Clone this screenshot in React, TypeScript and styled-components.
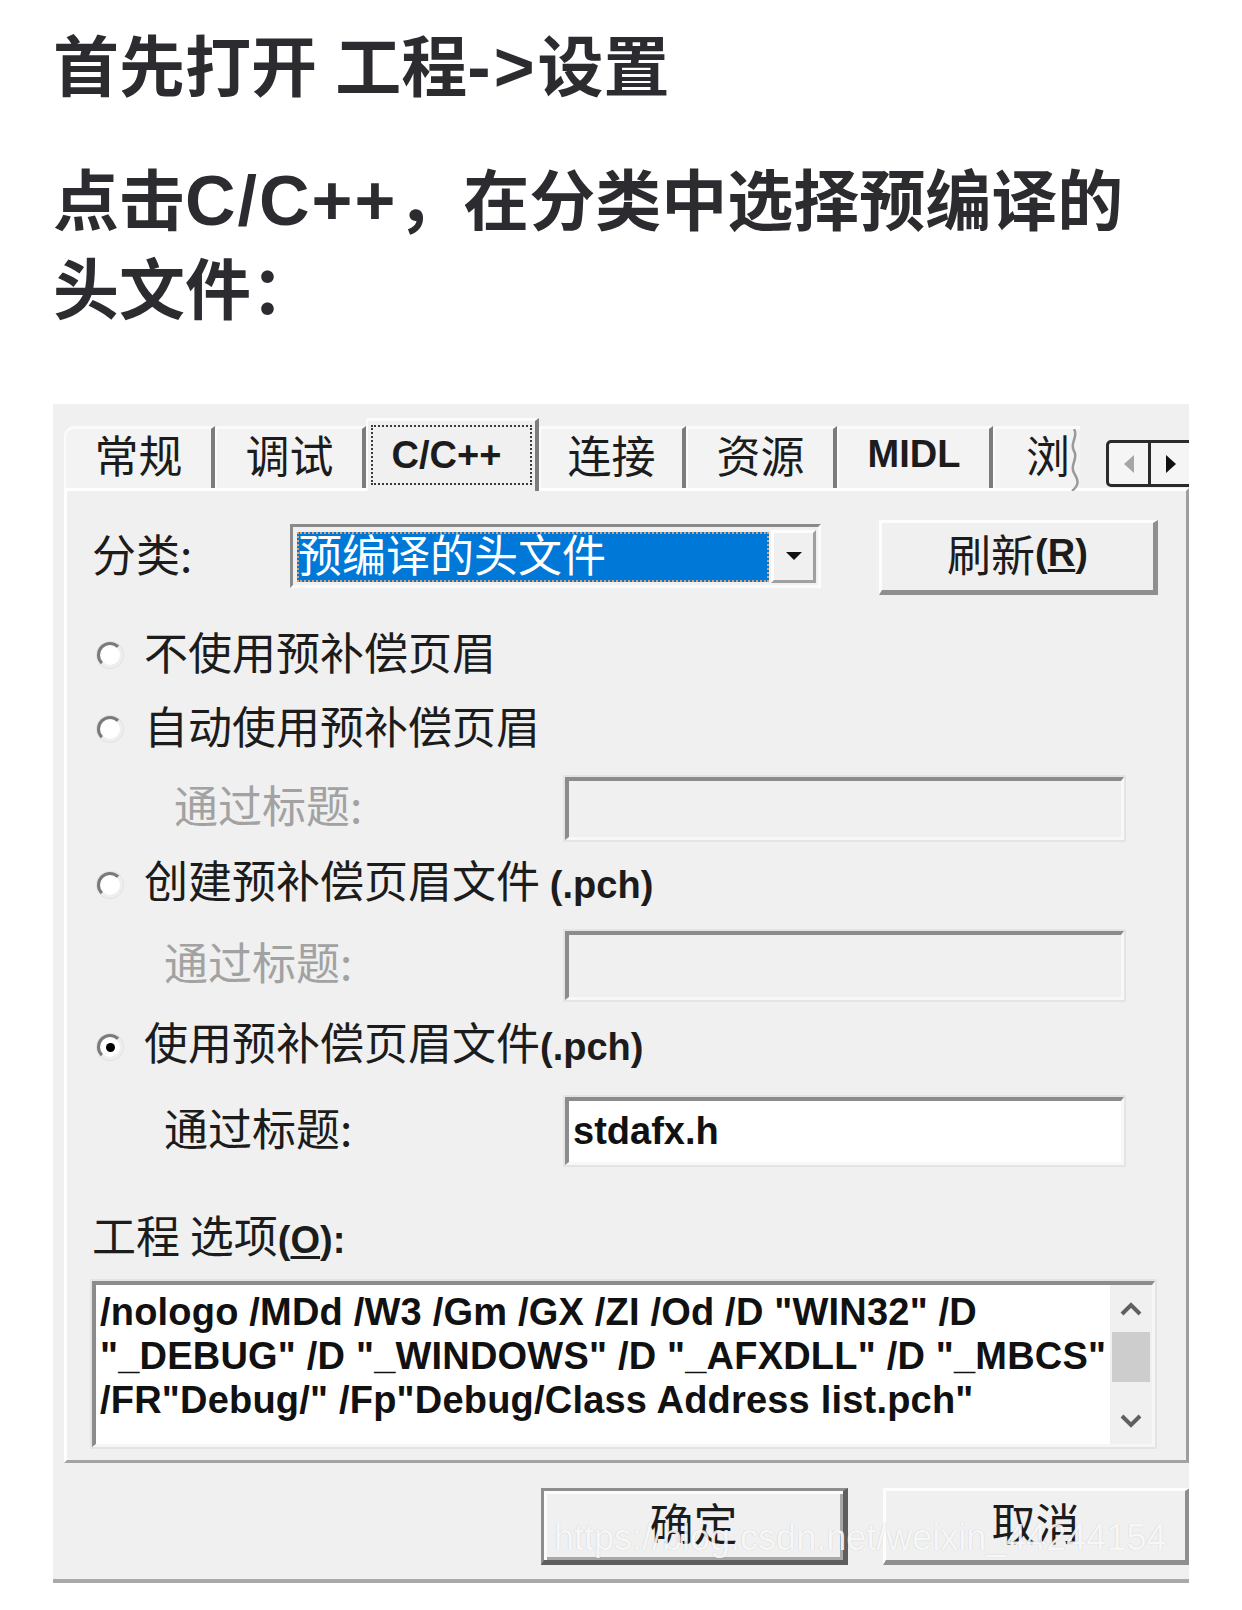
import React from "react";
import styled, { createGlobalStyle } from "styled-components";

const GlobalStyle = createGlobalStyle`
  html, body { margin: 0; padding: 0; background: #ffffff; }
  #root { width: 1242px; }
`;

const Page = styled.main`
  box-sizing: border-box;
  width: 1242px;
  height: 1610px;
  padding: 23px 0 0 53px;
  overflow: hidden;
  background: #ffffff;
`;

const Para = styled.p<{ $mb: number }>`
  margin: 0 0 ${(p) => p.$mb}px;
  font-family: "Liberation Sans", "Noto Sans CJK SC", sans-serif;
  font-size: 66px;
  line-height: 89px;
  font-weight: 700;
  color: #2c2c30;
  white-space: nowrap;
`;

const HeadLatin = styled.span<{ $ls?: number }>`
  font-size: 70px;
  letter-spacing: ${(p) => p.$ls ?? 0}px;
`;

const Dialog = styled.section`
  position: relative;
  box-sizing: border-box;
  width: 1136px;
  height: 1179px;
  background: #f0f0f0;
  border-bottom: 4px solid #a9a9a9;
  display: flex;
  flex-direction: column;
  overflow: hidden;
  font-family: "Noto Sans CJK SC", sans-serif;
  color: #1c1c1c;
`;

const TabStrip = styled.div`
  flex: none;
  height: 84px;
  display: flex;
  align-items: flex-end;
  padding-left: 11px;
  position: relative;
  z-index: 1;
`;

const Tab = styled.div<{ $w: number; $active?: boolean; $first?: boolean; $clipped?: boolean }>`
  flex: none;
  box-sizing: border-box;
  width: ${(p) => p.$w}px;
  height: ${(p) => (p.$active ? 73 : 62)}px;
  margin-bottom: ${(p) => (p.$active ? -3 : 0)}px;
  display: flex;
  align-items: center;
  justify-content: ${(p) => (p.$clipped ? "flex-start" : "center")};
  padding: ${(p) => (p.$active ? "4px 3px 6px" : p.$clipped ? "0 0 10px 31px" : "0 0 10px")};
  background: ${(p) => (p.$active ? "#f0f0f0" : "#f3f3f3")};
  border-top: 3px solid #fbfbfb;
  border-left: 2px solid #fbfbfb;
  border-right: ${(p) => (p.$clipped ? "none" : "4px solid #7c7c7c")};
  border-top-left-radius: ${(p) => (p.$first ? 10 : 3)}px;
  font-size: 44px;
  line-height: 1;
  color: #1c1c1c;
  position: relative;
`;

const FocusBox = styled.div`
  flex: 1;
  align-self: stretch;
  display: flex;
  align-items: center;
  justify-content: center;
  padding-right: 10px;
  border: 2px dotted #3a3a3a;
`;

const Wave = styled.svg`
  position: absolute;
  right: 0;
  top: 0;
`;

const ScrollArrows = styled.div`
  flex: none;
  box-sizing: border-box;
  display: flex;
  width: 94px;
  height: 47px;
  margin: 0 0 1px 26px;
  border: 3px solid #2b2b2b;
  border-radius: 5px;
  background: #f5f5f5;
`;

const ArrowCell = styled.div<{ $divider?: boolean }>`
  flex: none;
  width: 39px;
  display: flex;
  align-items: center;
  justify-content: center;
  border-right: ${(p) => (p.$divider ? "3px solid #2b2b2b" : "none")};
`;

const Panel = styled.div`
  flex: none;
  box-sizing: border-box;
  margin-left: 11px;
  width: 1125px;
  height: 975px;
  padding: 29px 25px 0 25px;
  border-top: 3px solid #ffffff;
  border-left: 3px solid #ffffff;
  border-right: 3px solid #9e9e9e;
  border-bottom: 3px solid #a3a3a3;
  display: flex;
  flex-direction: column;
`;

const ComboRow = styled.div`
  height: 75px;
  display: flex;
  align-items: center;
`;

const Label = styled.span<{ $w?: number; $disabled?: boolean; $indent?: number }>`
  flex: none;
  box-sizing: border-box;
  width: ${(p) => (p.$w ? `${p.$w}px` : "auto")};
  padding-left: ${(p) => p.$indent ?? 0}px;
  padding-bottom: 8px;
  font-size: 44px;
  line-height: 1.1;
  white-space: nowrap;
  color: ${(p) => (p.$disabled ? "#a2a2a2" : "#1c1c1c")};
`;

const Latin = styled.span`
  font-family: "Liberation Sans", Arial, sans-serif;
  font-weight: 700;
  font-size: 38px;
`;

const Combo = styled.div`
  flex: none;
  box-sizing: border-box;
  width: 531px;
  height: 64px;
  margin-top: -4px;
  display: flex;
  padding: 5px 3px 3px 4px;
  background: #f0f0f0;
  border-top: 3px solid #8a8a8a;
  border-left: 3px solid #8a8a8a;
  border-bottom: 3px solid #fbfbfb;
  border-right: 3px solid #fbfbfb;
`;

const Selection = styled.div`
  flex: 1;
  display: flex;
  align-items: center;
  padding: 0 0 6px 1px;
  background: #0078d7;
  outline: 2px dotted #e0a070;
  outline-offset: -2px;
  color: #ffffff;
  font-size: 44px;
  line-height: 1.1;
  white-space: nowrap;
`;

const DropButton = styled.div`
  flex: none;
  box-sizing: border-box;
  width: 45px;
  margin: -2px -1px -1px 2px;
  display: flex;
  align-items: center;
  justify-content: center;
  background: #f0f0f0;
  border-top: 3px solid #fdfdfd;
  border-left: 3px solid #fdfdfd;
  border-right: 3px solid #a0a0a0;
  border-bottom: 3px solid #a0a0a0;
`;

const PushButton = styled.div<{ $w: number; $h: number; $default?: boolean }>`
  flex: none;
  box-sizing: border-box;
  width: ${(p) => p.$w}px;
  height: ${(p) => p.$h}px;
  display: flex;
  align-items: center;
  justify-content: center;
  padding-bottom: 6px;
  background: #f0f0f0;
  font-size: 44px;
  line-height: 1.1;
  color: #1c1c1c;
  border-top: 3px solid ${(p) => (p.$default ? "#8e8e8e" : "#fdfdfd")};
  border-left: 3px solid ${(p) => (p.$default ? "#8e8e8e" : "#fdfdfd")};
  border-right: 5px solid ${(p) => (p.$default ? "#5e5e5e" : "#8f8f8f")};
  border-bottom: 5px solid ${(p) => (p.$default ? "#5e5e5e" : "#8f8f8f")};
  box-shadow: ${(p) => (p.$default ? "inset 3px 3px #fcfcfc, inset -3px -3px #a8a8a8" : "none")};
`;

const RefreshButton = styled(PushButton)`
  margin-left: 58px;
`;

const RadioRow = styled.div<{ $h: number; $mt?: number }>`
  height: ${(p) => p.$h}px;
  margin-top: ${(p) => p.$mt ?? 0}px;
  display: flex;
  align-items: center;
  padding-left: 5px;
  gap: 21px;
`;

const Radio = styled.span<{ $checked?: boolean }>`
  flex: none;
  box-sizing: border-box;
  width: 26px;
  height: 26px;
  border-radius: 50%;
  background: #ffffff;
  border: 3px solid;
  border-color: #7a7a7a #eeeeee #eeeeee #7a7a7a;
  box-shadow: 0 0 0 1px #e2e2e2;
  display: flex;
  align-items: center;
  justify-content: center;
  &::after {
    content: "";
    display: ${(p) => (p.$checked ? "block" : "none")};
    width: 9px;
    height: 9px;
    border-radius: 50%;
    background: #000000;
  }
`;

const FieldRow = styled.div<{ $h: number }>`
  height: ${(p) => p.$h}px;
  display: flex;
  align-items: center;
  padding-left: 72px;
`;

const TextField = styled.div<{ $h: number; $enabled?: boolean }>`
  flex: none;
  box-sizing: border-box;
  width: 559px;
  height: ${(p) => p.$h}px;
  display: flex;
  align-items: center;
  padding-left: 4px;
  background: ${(p) => (p.$enabled ? "#ffffff" : "#f0f0f0")};
  border-top: 4px solid #8c8c8c;
  border-left: 4px solid #8c8c8c;
  border-bottom: 3px solid #f8f8f8;
  border-right: 3px solid #f8f8f8;
  box-shadow: 0 0 0 2px #e4e4e4;
  color: #111111;
`;

const OptionsLabel = styled.div`
  height: 80px;
  margin-top: 22px;
  display: flex;
  align-items: center;
`;

const OptionsBox = styled.div`
  flex: none;
  box-sizing: border-box;
  width: 1063px;
  height: 166px;
  margin-top: 1px;
  display: flex;
  background: #ffffff;
  border-top: 4px solid #8c8c8c;
  border-left: 4px solid #8c8c8c;
  border-bottom: 3px solid #f6f6f6;
  border-right: 3px solid #f6f6f6;
  box-shadow: 0 0 0 2px #e4e4e4;
`;

const OptionsText = styled.div`
  flex: 1;
  padding: 5px 0 0 4px;
  font-family: "Liberation Sans", Arial, sans-serif;
  font-weight: 700;
  font-size: 38px;
  letter-spacing: 0.2px;
  line-height: 44px;
  color: #111111;
  white-space: nowrap;
  overflow: hidden;
`;

const ScrollBar = styled.div`
  flex: none;
  width: 42px;
  display: flex;
  flex-direction: column;
  align-items: center;
  background: #f0f0f0;
`;

const ScrollBtn = styled.div`
  height: 47px;
  width: 100%;
  display: flex;
  align-items: center;
  justify-content: center;
`;

const Thumb = styled.div`
  width: 38px;
  height: 50px;
  background: #cdcdcd;
`;

const ScrollTrack = styled.div`
  flex: 1;
`;

const ButtonRow = styled.div`
  flex: 1;
  display: flex;
  gap: 35px;
  padding: 25px 0 0 488px;
`;

const Watermark = styled.div`
  position: absolute;
  left: 501px;
  top: 1112px;
  font-family: "Liberation Sans", Arial, sans-serif;
  font-size: 36px;
  line-height: 44px;
  color: rgba(255, 255, 255, 0.88);
  text-shadow: 0 0 1px rgba(0, 0, 0, 0.22);
  white-space: nowrap;
  pointer-events: none;
`;

const Ul = styled.span`
  text-decoration: underline;
  text-decoration-thickness: 3px;
  text-underline-offset: 3px;
`;

const ChevronUp = () => (
  <svg width="24" height="16" viewBox="0 0 24 16">
    <polyline points="3,13 12,4 21,13" fill="none" stroke="#606060" strokeWidth="4" />
  </svg>
);

const ChevronDown = () => (
  <svg width="24" height="16" viewBox="0 0 24 16">
    <polyline points="3,3 12,12 21,3" fill="none" stroke="#606060" strokeWidth="4" />
  </svg>
);

export default function App() {
  return (
    <>
      <GlobalStyle />
      <Page>
        <Para $mb={44}>
          首先打开 工程<HeadLatin $ls={3}>-&gt;</HeadLatin>设置
        </Para>
        <Para $mb={68}>
          点击<HeadLatin $ls={2}>C/C++</HeadLatin>，在分类中选择预编译的
          <br />
          头文件：
        </Para>

        <Dialog>
          <TabStrip>
            <Tab $w={151} $first>常规</Tab>
            <Tab $w={151}>调试</Tab>
            <Tab $w={173} $active>
              <FocusBox>
                <Latin>C/C++</Latin>
              </FocusBox>
            </Tab>
            <Tab $w={147}>连接</Tab>
            <Tab $w={151}>资源</Tab>
            <Tab $w={156}>
              <Latin>MIDL</Latin>
            </Tab>
            <Tab $w={87} $clipped>
              浏
              <Wave width="12" height="62" viewBox="0 0 12 62">
                <path
                  d="M6 0 C 11 8, 1 14, 6 22 S 1 36, 6 44 S 11 56, 4 62"
                  fill="none"
                  stroke="#9a9a9a"
                  strokeWidth="2.5"
                />
              </Wave>
            </Tab>
            <ScrollArrows>
              <ArrowCell $divider>
                <svg width="12" height="20" viewBox="0 0 12 20">
                  <polygon points="11,1 11,19 1,10" fill="#a6a6a6" />
                </svg>
              </ArrowCell>
              <ArrowCell>
                <svg width="12" height="20" viewBox="0 0 12 20">
                  <polygon points="1,1 1,19 11,10" fill="#111111" />
                </svg>
              </ArrowCell>
            </ScrollArrows>
          </TabStrip>

          <Panel>
            <ComboRow>
              <Label $w={198}>分类:</Label>
              <Combo>
                <Selection>预编译的头文件</Selection>
                <DropButton>
                  <svg width="18" height="10" viewBox="0 0 18 10">
                    <polygon points="1,1 17,1 9,9" fill="#111111" />
                  </svg>
                </DropButton>
              </Combo>
              <RefreshButton $w={279} $h={75}>
                刷新
                <Latin>
                  (<Ul>R</Ul>)
                </Latin>
              </RefreshButton>
            </ComboRow>

            <RadioRow $h={74} $mt={23}>
              <Radio />
              <Label>不使用预补偿页眉</Label>
            </RadioRow>
            <RadioRow $h={74}>
              <Radio />
              <Label>自动使用预补偿页眉</Label>
            </RadioRow>
            <FieldRow $h={84}>
              <Label $w={401} $indent={10} $disabled>
                通过标题:
              </Label>
              <TextField $h={63} />
            </FieldRow>

            <RadioRow $h={70}>
              <Radio />
              <Label>
                创建预补偿页眉文件 <Latin>(.pch)</Latin>
              </Label>
            </RadioRow>
            <FieldRow $h={90}>
              <Label $w={401} $disabled>
                通过标题:
              </Label>
              <TextField $h={69} />
            </FieldRow>

            <RadioRow $h={74}>
              <Radio $checked />
              <Label>
                使用预补偿页眉文件<Latin>(.pch)</Latin>
              </Label>
            </RadioRow>
            <FieldRow $h={94}>
              <Label $w={401}>通过标题:</Label>
              <TextField $h={68} $enabled>
                <Latin>stdafx.h</Latin>
              </TextField>
            </FieldRow>

            <OptionsLabel>
              <Label>
                工程 选项
                <Latin>
                  (<Ul>O</Ul>):
                </Latin>
              </Label>
            </OptionsLabel>
            <OptionsBox>
              <OptionsText>
                /nologo /MDd /W3 /Gm /GX /ZI /Od /D "WIN32" /D
                <br />
                "_DEBUG" /D "_WINDOWS" /D "_AFXDLL" /D "_MBCS"
                <br />
                /FR"Debug/" /Fp"Debug/Class Address list.pch"
              </OptionsText>
              <ScrollBar>
                <ScrollBtn>
                  <ChevronUp />
                </ScrollBtn>
                <Thumb />
                <ScrollTrack />
                <ScrollBtn>
                  <ChevronDown />
                </ScrollBtn>
              </ScrollBar>
            </OptionsBox>
          </Panel>

          <ButtonRow>
            <PushButton $w={307} $h={77} $default>
              确定
            </PushButton>
            <PushButton $w={307} $h={77}>
              取消
            </PushButton>
          </ButtonRow>

          <Watermark>https://blog.csdn.net/weixin_44244154</Watermark>
        </Dialog>
      </Page>
    </>
  );
}
